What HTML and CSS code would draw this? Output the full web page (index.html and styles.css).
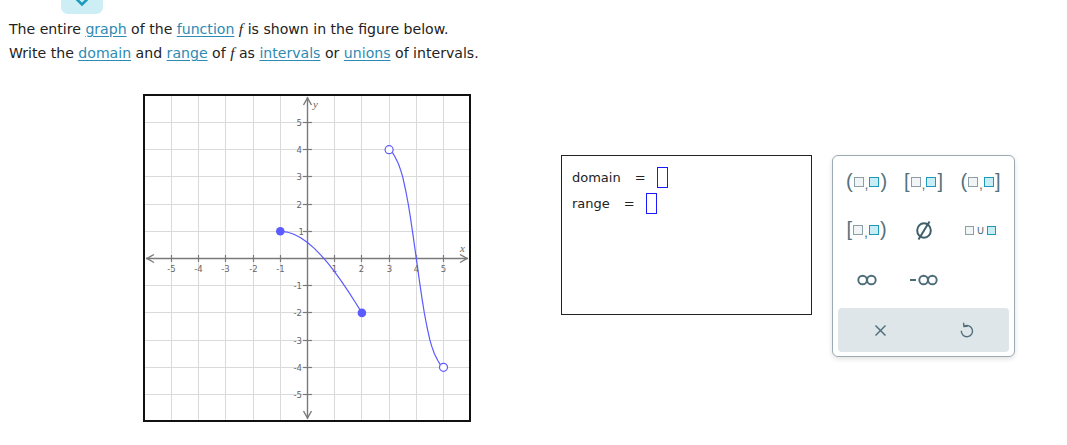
FILE: index.html
```html
<!DOCTYPE html>
<html>
<head>
<meta charset="utf-8">
<link rel="stylesheet" href="styles.css">
</head>
<body>
<div class="topbtn">
  <svg class="chev" width="14" height="7" viewBox="0 0 14 7"><polyline points="1.5,-1 7,4.5 12.5,-1" fill="none" stroke="#1a9bbb" stroke-width="2.6"/></svg>
</div>
<div class="intro">
  <p>The entire <a class="lnk">graph</a> of the <a class="lnk">function</a> <i class="fv">f</i> is shown in the figure below.</p>
  <p>Write the <a class="lnk">domain</a> and <a class="lnk">range</a> of <i class="fv">f</i> as <a class="lnk">intervals</a> or <a class="lnk">unions</a> of intervals.</p>
</div>
<div class="main">
  <div class="graph">
    <svg width="328" height="328" viewBox="0 0 328 328">
      <rect x="1" y="1" width="326" height="326" fill="#fff" stroke="#111" stroke-width="2"/>
      <g stroke="#dadada" stroke-width="1">
        <line x1="28.5" y1="2" x2="28.5" y2="326"/><line x1="55.5" y1="2" x2="55.5" y2="326"/>
        <line x1="82.5" y1="2" x2="82.5" y2="326"/><line x1="110.5" y1="2" x2="110.5" y2="326"/>
        <line x1="137.5" y1="2" x2="137.5" y2="326"/><line x1="191.5" y1="2" x2="191.5" y2="326"/>
        <line x1="218.5" y1="2" x2="218.5" y2="326"/><line x1="246.5" y1="2" x2="246.5" y2="326"/>
        <line x1="273.5" y1="2" x2="273.5" y2="326"/><line x1="300.5" y1="2" x2="300.5" y2="326"/>
        <line y1="28.5" x1="2" y2="28.5" x2="326"/><line y1="55.5" x1="2" y2="55.5" x2="326"/>
        <line y1="82.5" x1="2" y2="82.5" x2="326"/><line y1="110.5" x1="2" y2="110.5" x2="326"/>
        <line y1="137.5" x1="2" y2="137.5" x2="326"/><line y1="191.5" x1="2" y2="191.5" x2="326"/>
        <line y1="218.5" x1="2" y2="218.5" x2="326"/><line y1="246.5" x1="2" y2="246.5" x2="326"/>
        <line y1="273.5" x1="2" y2="273.5" x2="326"/><line y1="300.5" x1="2" y2="300.5" x2="326"/>
      </g>
      <g stroke="#7a7a7a" stroke-width="1.4" fill="none">
        <line x1="3" y1="164.5" x2="325" y2="164.5"/>
        <line x1="164.5" y1="3" x2="164.5" y2="325"/>
        <polyline points="11,160.5 4,164.5 11,168.5"/>
        <polyline points="317,160.5 324,164.5 317,168.5"/>
        <polyline points="160.5,11 164.5,4 168.5,11"/>
        <polyline points="160.5,317 164.5,324 168.5,317"/>
        <g stroke-width="1.2">
          <line x1="28.5" y1="161" x2="28.5" y2="168"/><line x1="55.5" y1="161" x2="55.5" y2="168"/>
          <line x1="82.5" y1="161" x2="82.5" y2="168"/><line x1="110.5" y1="161" x2="110.5" y2="168"/>
          <line x1="137.5" y1="161" x2="137.5" y2="168"/><line x1="191.5" y1="161" x2="191.5" y2="168"/>
          <line x1="218.5" y1="161" x2="218.5" y2="168"/><line x1="246.5" y1="161" x2="246.5" y2="168"/>
          <line x1="273.5" y1="161" x2="273.5" y2="168"/><line x1="300.5" y1="161" x2="300.5" y2="168"/>
          <line y1="28.5" x1="160" y2="28.5" x2="169"/><line y1="55.5" x1="160" y2="55.5" x2="169"/>
          <line y1="82.5" x1="160" y2="82.5" x2="169"/><line y1="110.5" x1="160" y2="110.5" x2="169"/>
          <line y1="137.5" x1="160" y2="137.5" x2="169"/><line y1="191.5" x1="160" y2="191.5" x2="169"/>
          <line y1="218.5" x1="160" y2="218.5" x2="169"/><line y1="246.5" x1="160" y2="246.5" x2="169"/>
          <line y1="273.5" x1="160" y2="273.5" x2="169"/><line y1="300.5" x1="160" y2="300.5" x2="169"/>
        </g>
      </g>
      <g class="ticklbl" text-anchor="middle">
        <text x="28.5" y="178">-5</text><text x="55.5" y="178">-4</text><text x="82.5" y="178">-3</text>
        <text x="110.5" y="178">-2</text><text x="137.5" y="178">-1</text><text x="191.5" y="178">1</text>
        <text x="218.5" y="178">2</text><text x="246.5" y="178">3</text><text x="273.5" y="178">4</text>
        <text x="300.5" y="178">5</text>
      </g>
      <g class="ticklbl" text-anchor="end">
        <text x="159" y="31.5">5</text><text x="159" y="58.5">4</text><text x="159" y="85.5">3</text>
        <text x="159" y="113.5">2</text><text x="161" y="140.5">1</text><text x="159" y="194.5">-1</text>
        <text x="159" y="221.5">-2</text><text x="159" y="249.5">-3</text><text x="159" y="276.5">-4</text>
        <text x="159" y="303.5">-5</text>
      </g>
      <text class="axlbl" x="317" y="158">x</text>
      <text class="axlbl" x="170" y="14">y</text>
      <g fill="none" stroke="#5b5bff" stroke-width="1.2" stroke-linejoin="round">
        <polyline points="137.3,137.3 144.1,138.05 150.9,140.23 157.7,143.75 164.5,148.51 171.3,154.4 178.1,161.32 184.9,169.18 191.7,177.88 198.5,187.32 205.3,197.4 212.1,208.01 218.9,218.9"/>
        <polyline points="246.1,55.7 249.36,58.42 251.81,62.5 255.21,69.3 257.66,76.1 259.7,82.9 262.69,96.5 265.28,110.1 267.45,123.7 269.49,137.3 271.4,150.9 273.3,164.5 275.2,178.1 277.11,191.7 279.15,205.3 281.32,218.9 283.91,232.5 286.9,246.1 288.94,252.9 291.39,259.7 294.79,266.5 297.24,270.58 300.5,273.3"/>
      </g>
      <circle cx="137.3" cy="137.3" r="4.3" fill="#5b5bff"/>
      <circle cx="218.9" cy="218.9" r="4.3" fill="#5b5bff"/>
      <circle cx="246.1" cy="55.7" r="4" fill="#fff" stroke="#5b5bff" stroke-width="1.2"/>
      <circle cx="300.5" cy="273.3" r="4" fill="#fff" stroke="#5b5bff" stroke-width="1.2"/>
    </svg>
  </div>
  <div class="answer">
    <div class="arow"><span class="alabel">domain</span><span class="eq">=</span><span class="slot"></span></div>
    <div class="arow"><span class="alabel">range</span><span class="eq">=</span><span class="slot"></span></div>
  </div>
  <div class="keypad">
    <div class="keys">
      <div class="key"><span class="paren">(</span><span class="sq sq-a"></span><span class="comma">,</span><span class="sq sq-b"></span><span class="paren">)</span></div>
      <div class="key"><span class="paren">[</span><span class="sq sq-a"></span><span class="comma">,</span><span class="sq sq-b"></span><span class="paren">]</span></div>
      <div class="key"><span class="paren">(</span><span class="sq sq-a"></span><span class="comma">,</span><span class="sq sq-b"></span><span class="paren">]</span></div>
      <div class="key"><span class="paren">[</span><span class="sq sq-a"></span><span class="comma">,</span><span class="sq sq-b"></span><span class="paren">)</span></div>
      <div class="key">
        <svg width="20" height="21" viewBox="0 0 20 21"><ellipse cx="10" cy="10.5" rx="6.8" ry="7.3" fill="none" stroke="#3f5f6b" stroke-width="2"/><line x1="4.5" y1="19.5" x2="15.5" y2="1.5" stroke="#3f5f6b" stroke-width="2"/></svg>
      </div>
      <div class="key"><span class="sq sq-a sm"></span><span class="cup">∪</span><span class="sq sq-b sm"></span></div>
      <div class="key">
        <svg class="infsvg" width="20" height="12" viewBox="0 0 20 12"><circle cx="5.6" cy="6" r="4.3" fill="none" stroke="#4a6b77" stroke-width="1.9"/><circle cx="14.4" cy="6" r="4.3" fill="none" stroke="#4a6b77" stroke-width="1.9"/></svg>
      </div>
      <div class="key"><span class="dash"></span>
        <svg class="infsvg" width="20" height="12" viewBox="0 0 20 12"><circle cx="5.6" cy="6" r="4.3" fill="none" stroke="#4a6b77" stroke-width="1.9"/><circle cx="14.4" cy="6" r="4.3" fill="none" stroke="#4a6b77" stroke-width="1.9"/></svg>
      </div>
      <div class="key"></div>
    </div>
    <div class="actions">
      <div class="act">
        <svg width="13" height="13" viewBox="0 0 13 13"><line x1="1.5" y1="1.5" x2="11.5" y2="11.5" stroke="#4f6f7a" stroke-width="1.5"/><line x1="11.5" y1="1.5" x2="1.5" y2="11.5" stroke="#4f6f7a" stroke-width="1.5"/></svg>
      </div>
      <div class="act">
        <svg width="15" height="16" viewBox="0 0 15 16"><path d="M5.2 4.2 A5.6 5.6 0 1 1 2.3 8.8" fill="none" stroke="#4f6f7a" stroke-width="1.4"/><polyline points="4.6,0.8 4.9,4.4 8.6,4.2" fill="none" stroke="#4f6f7a" stroke-width="1.4"/></svg>
      </div>
    </div>
  </div>
</div>
</body>
</html>
```
FILE: styles.css
```css
body {
  margin: 0;
  font-family: "DejaVu Sans", Verdana, sans-serif;
  font-size: 13px;
  color: #222;
  background: #fff;
}

.topbtn {
  margin-left: 61px;
  width: 42px;
  height: 14px;
  background: #cdeef5;
  border-radius: 0 0 7px 7px;
  display: flex;
  justify-content: center;
}

.chev {
  display: block;
}

.intro {
  padding: 3px 0 0 9px;
  font-size: 14.1px;
}

.intro p {
  margin: 0;
  height: 24px;
  line-height: 24px;
}

.lnk {
  color: #2d8ab3;
  text-decoration: underline;
  text-underline-offset: 2px;
}

.fv {
  font-family: "Liberation Serif", "Times New Roman", serif;
  font-size: 15.5px;
  font-style: italic;
  line-height: 1;
}

.main {
  display: flex;
  align-items: flex-start;
  margin-top: 29px;
  padding-left: 143px;
}

.graph svg {
  display: block;
}

.ticklbl {
  font-family: "DejaVu Sans", sans-serif;
  font-size: 8.5px;
  fill: #666;
}

.axlbl {
  font-family: "Liberation Serif", serif;
  font-style: italic;
  font-size: 11px;
  fill: #666;
}

.answer {
  margin-left: 90px;
  margin-top: 61px;
  width: 239px;
  height: 150px;
  border: 1px solid #222;
  padding: 8px 0 0 10px;
}

.arow {
  display: flex;
  align-items: center;
  height: 26px;
}

.alabel {
  color: #222;
}

.eq {
  margin: 0 11px 0 14px;
}

.slot {
  width: 9px;
  height: 19px;
  border: 1px solid #1a1aff;
}

.keypad {
  margin-left: 20px;
  margin-top: 61px;
  width: 171px;
  padding: 2px 5px 4px 5px;
  border: 1px solid #9aabb3;
  border-radius: 6px;
  box-shadow: 0 2px 5px rgba(0, 0, 0, 0.12);
  background: #fff;
}

.keys {
  display: grid;
  grid-template-columns: repeat(3, 1fr);
  grid-auto-rows: 48px;
}

.key {
  display: flex;
  align-items: center;
  justify-content: center;
  color: #56727d;
}

.paren {
  font-family: "Liberation Sans", Arial, sans-serif;
  font-size: 20px;
  line-height: 1;
  position: relative;
  top: -1px;
}

.sq {
  box-sizing: border-box;
  width: 10px;
  height: 10px;
  border: 1.5px solid;
  margin: 0 1px;
}

.sq.sm {
  width: 9px;
  height: 9px;
}

.sq-a {
  border-color: #8c9ea6;
  background: #f2f5f6;
}

.sq-b {
  border-color: #1e9ab8;
  background: #c9edf5;
}

.comma {
  font-family: "Liberation Sans", Arial, sans-serif;
  font-size: 14px;
  line-height: 1;
  position: relative;
  top: 2px;
}

.cup {
  font-family: "DejaVu Sans", sans-serif;
  font-size: 12px;
  margin: 0 1px;
  color: #56727d;
}

.infsvg {
  display: block;
  position: relative;
  top: 2px;
}

.dash {
  width: 6px;
  height: 2px;
  background: #4a6b77;
  margin-right: 2px;
  position: relative;
  top: 2px;
}

.actions {
  margin-top: 6px;
  height: 44px;
  background: #dfe6e9;
  border-radius: 4px;
  display: grid;
  grid-template-columns: 1fr 1fr;
}

.act {
  display: flex;
  align-items: center;
  justify-content: center;
}

.act svg {
  display: block;
}
```
